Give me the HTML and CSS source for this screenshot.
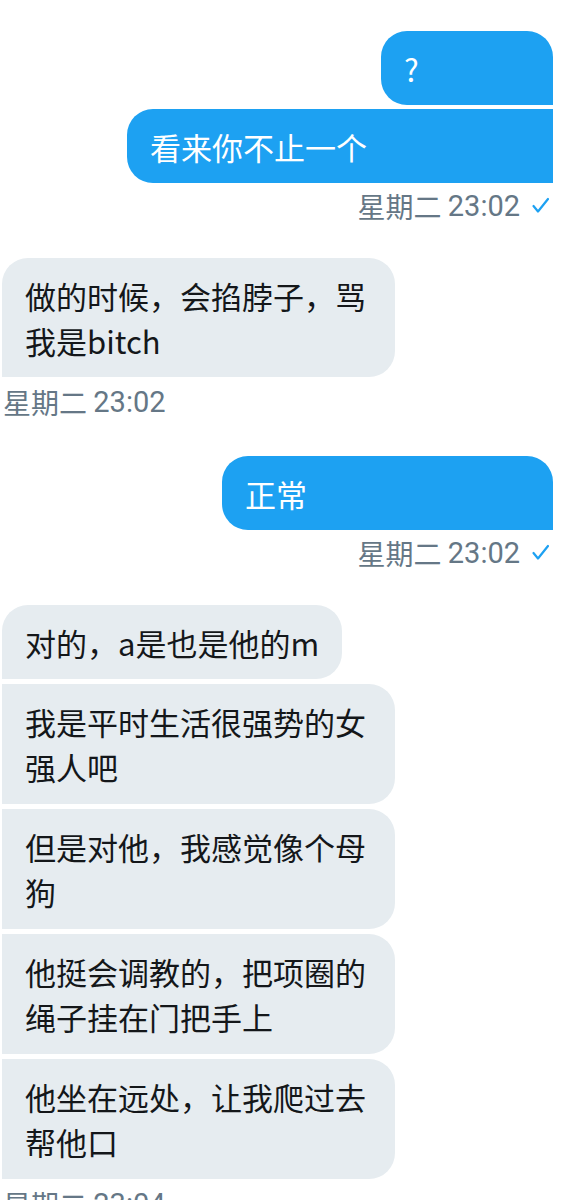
FILE: index.html
```html
<!DOCTYPE html>
<html lang="zh">
<head>
<meta charset="utf-8">
<title>Messages</title>
<link rel="stylesheet" href="styles.css">
</head>
<body>
<main class="chat">
  <section class="group sent">
    <div class="bubble first w-q">?</div>
    <div class="bubble last w-kan">看来你不止一个</div>
    <div class="stamp">星期二 <span class="num">23:02</span><svg class="check" width="17" height="17" viewBox="0 0 17 17"><polyline points="1.5,9 6,14.5 16,2" fill="none" stroke="#1da1f2" stroke-width="2.2" stroke-linecap="round" stroke-linejoin="round"/></svg></div>
  </section>

  <section class="group recv">
    <div class="bubble single">做的时候，会掐脖子，骂我是bitch</div>
    <div class="stamp">星期二 <span class="num">23:02</span></div>
  </section>

  <section class="group sent">
    <div class="bubble single w-zc">正常</div>
    <div class="stamp">星期二 <span class="num">23:02</span><svg class="check" width="17" height="17" viewBox="0 0 17 17"><polyline points="1.5,9 6,14.5 16,2" fill="none" stroke="#1da1f2" stroke-width="2.2" stroke-linecap="round" stroke-linejoin="round"/></svg></div>
  </section>

  <section class="group recv">
    <div class="bubble first">对的，a是也是他的m</div>
    <div class="bubble mid">我是平时生活很强势的女强人吧</div>
    <div class="bubble mid">但是对他，我感觉像个母狗</div>
    <div class="bubble mid">他挺会调教的，把项圈的绳子挂在门把手上</div>
    <div class="bubble last">他坐在远处，让我爬过去帮他口</div>
    <div class="stamp">星期二 <span class="num">23:04</span></div>
  </section>
</main>
</body>
</html>
```

FILE: styles.css
```css
html, body {
  margin: 0;
  padding: 0;
  background: #ffffff;
}

body {
  font-family: "Noto Sans CJK SC", "Noto Sans", sans-serif;
  overflow: hidden;
}

.chat {
  display: flex;
  flex-direction: column;
  padding: 31px 22px 0 2px;
}

.group {
  display: flex;
  flex-direction: column;
  margin-bottom: 35px;
}

.group.sent {
  align-items: flex-end;
  gap: 4px;
  margin-bottom: 35px;
}

.group.recv {
  align-items: flex-start;
  gap: 5px;
  margin-bottom: 37px;
}

.bubble {
  box-sizing: border-box;
  font-size: 31px;
  line-height: 45px;
  padding: 15px 23px 14px;
  border-radius: 26px;
}

.sent .bubble {
  background: #1da1f2;
  color: #ffffff;
}

.recv .bubble {
  background: #e6ecf0;
  color: #14171a;
  max-width: 393px;
}

.recv .bubble.mid,
.recv .bubble.last {
  padding-bottom: 15px;
}

.sent .bubble.first {
  border-bottom-right-radius: 0;
}
.sent .bubble.last {
  border-top-right-radius: 0;
  border-bottom-right-radius: 0;
}
.sent .bubble.single {
  border-bottom-right-radius: 0;
}

.recv .bubble.single,
.recv .bubble.first {
  border-bottom-left-radius: 0;
}
.recv .bubble.mid,
.recv .bubble.last {
  border-top-left-radius: 0;
  border-bottom-left-radius: 0;
}

.w-q { width: 172px; }
.w-kan { width: 426px; }
.w-zc { width: 331px; }

.stamp {
  display: flex;
  align-items: center;
  font-size: 28px;
  line-height: 34px;
  color: #657786;
  margin-top: 2px;
  white-space: pre;
}

.num {
  font-family: Roboto, "Noto Sans CJK SC", sans-serif;
  font-size: 29px;
}

.sent .stamp {
  padding-right: 4px;
}

.recv .stamp {
  padding-left: 1px;
  margin-top: 3px;
}

.check {
  margin-left: 12px;
  margin-top: -2px;
}
```
